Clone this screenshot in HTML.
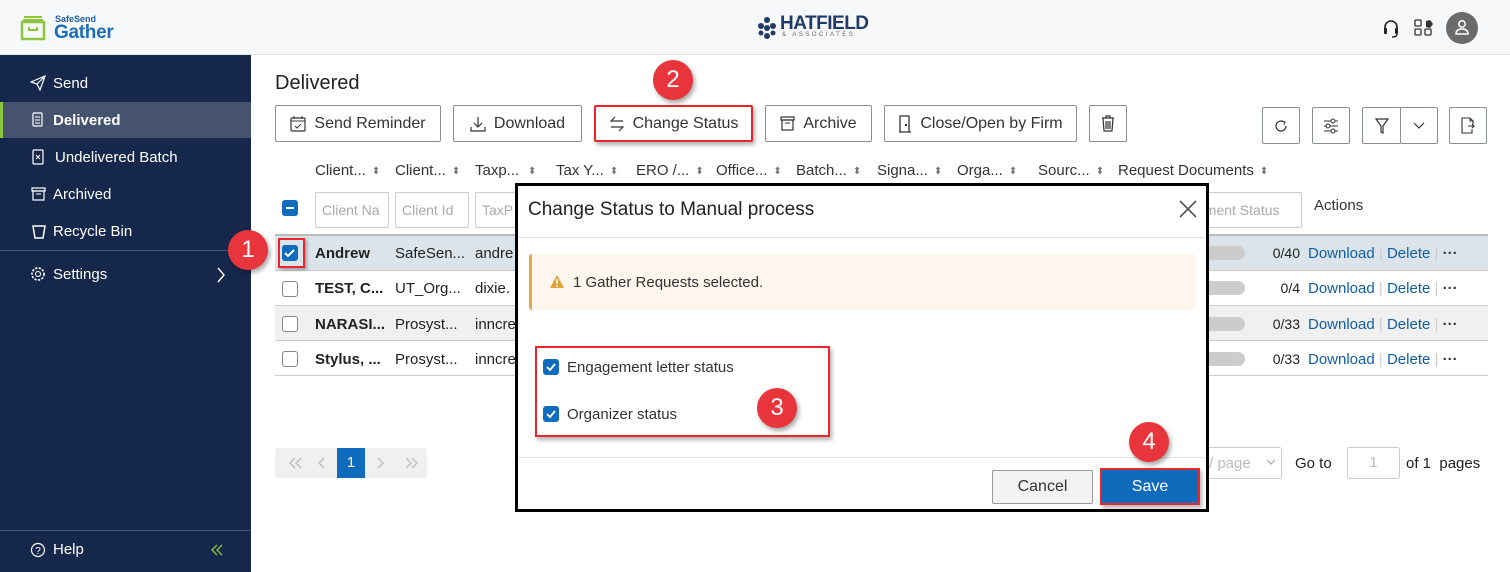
<!DOCTYPE html><html><head><style>
*{box-sizing:border-box;margin:0;padding:0}
body{width:1510px;height:572px;overflow:hidden;font-family:"Liberation Sans",sans-serif;background:#fff;position:relative;color:#222}
.a{position:absolute}
.top{left:0;top:0;width:1510px;height:55px;background:#f7f8fa;border-bottom:1px solid #e6e6e6}
.side{left:0;top:55px;width:251px;height:517px;background:#15284b}
.nav{position:absolute;left:53px;color:#fff;font-size:15px}
.btn{position:absolute;top:105px;height:37px;border:1px solid #8a8f95;border-radius:2px;background:#fff;font-size:16px;color:#333;display:flex;align-items:center;justify-content:center;gap:8px}
.ib{position:absolute;top:107px;height:37px;border:1px solid #8a8f95;border-radius:2px;background:#fff;display:flex;align-items:center;justify-content:center}
.h{position:absolute;top:162px;font-size:15px;color:#333;white-space:nowrap}
.h i{font-style:normal;font-size:10px;color:#777;margin-left:6px;vertical-align:1px}
.f{position:absolute;top:192px;height:36px;border:1px solid #ccc;border-radius:2px;color:#aaa;font-size:14px;padding:9px 6px;overflow:hidden;white-space:nowrap}
.row{position:absolute;left:275px;width:1213px;height:35px;border-bottom:1px solid #ccc}
.c{position:absolute;font-size:15px;white-space:nowrap}
.cb{position:absolute;left:282px;width:16px;height:16px;border:1px solid #888;border-radius:3px;background:#fff}
.badge{position:absolute;width:40px;height:40px;border-radius:50%;background:#e8353b;color:#fff;font-size:24px;text-align:center;line-height:40px;box-shadow:2px 3px 5px rgba(0,0,0,.35)}
.lnk{color:#0f5ea8}
.bar{position:absolute;left:1205px;width:40px;height:14px;background:#ccc;border-radius:0 7px 7px 0}
</style></head><body>
<div class="a top"></div>
<svg class="a" style="left:20px;top:14px" width="28" height="28"><rect x="2" y="8" width="22" height="17" fill="none" stroke="#8cc63f" stroke-width="2.5"/><rect x="4" y="2" width="18" height="2" fill="#8cc63f"/><rect x="3" y="5" width="20" height="2" fill="#8cc63f"/><path d="M9 13v3h8v-3" fill="none" stroke="#8cc63f" stroke-width="2"/></svg>
<div class="a" style="left:55px;top:14px;font-size:9px;font-weight:bold;color:#1b5fa3">SafeSend</div>
<div class="a" style="left:54px;top:22px;font-size:19px;font-weight:bold;color:#1b6fb8;letter-spacing:-.3px">Gather</div>
<svg class="a" style="left:756px;top:16px" width="22" height="24"><g fill="#1f3a6b"><circle cx="11" cy="4" r="3"/><circle cx="5" cy="10" r="3"/><circle cx="17" cy="10" r="3"/><circle cx="11" cy="12" r="3"/><circle cx="5" cy="17" r="2.5"/><circle cx="17" cy="17" r="2.5"/><circle cx="11" cy="20" r="3"/></g></svg>
<div class="a" style="left:780px;top:13px;font-size:19px;font-weight:bold;color:#1f3a6b;letter-spacing:-.5px">HATFIELD</div>
<div class="a" style="left:782px;top:32px;font-size:6px;color:#666;letter-spacing:2.5px">&amp; ASSOCIATES</div>
<svg class="a" style="left:1382px;top:18px" width="18" height="20"><path d="M3 11V9a6 6 0 0 1 12 0v2" fill="none" stroke="#222" stroke-width="1.6"/><rect x="2" y="10" width="3" height="6" rx="1" fill="#222"/><rect x="13" y="10" width="3" height="6" rx="1" fill="#222"/><path d="M15 16q0 3-5 3" fill="none" stroke="#222" stroke-width="1.4"/></svg>
<svg class="a" style="left:1414px;top:18px" width="22" height="20"><g fill="none" stroke="#333" stroke-width="1.3"><rect x="1" y="2" width="6" height="6" rx="1"/><rect x="1" y="11" width="6" height="6" rx="1"/><rect x="11" y="11" width="6" height="6" rx="1"/></g><path d="M12 3l4-1 3 4-3 4-4-1z" fill="#333"/></svg>
<div class="a" style="left:1446px;top:12px;width:32px;height:32px;border-radius:50%;background:#6b6b6b"></div>
<svg class="a" style="left:1454px;top:19px" width="16" height="18"><circle cx="8" cy="5" r="3.2" fill="none" stroke="#fff" stroke-width="1.5"/><path d="M2 15q0-5 6-5t6 5z" fill="none" stroke="#fff" stroke-width="1.5"/></svg>
<div class="a side"></div>
<div class="a" style="left:0;top:102px;width:251px;height:36px;background:#45536e"></div>
<div class="a" style="left:0;top:102px;width:3px;height:36px;background:#8cc63f"></div>
<div class="a" style="left:0;top:250px;width:251px;height:1px;background:#4a5878"></div>
<div class="a" style="left:0;top:530px;width:251px;height:1px;background:#4a5878"></div>
<svg class="a" style="left:30px;top:75px" width="16" height="16"><path d="M1 7L15 1 10 15 7 9z M7 9L15 1" fill="none" stroke="#fff" stroke-width="1.2"/></svg>
<div class="nav" style="top:75px">Send</div>
<svg class="a" style="left:32px;top:112px" width="12" height="16"><rect x="1" y="1" width="9" height="13" rx="1" fill="none" stroke="#fff" stroke-width="1.2"/><path d="M3 5h5M3 8h5M3 11h5" stroke="#fff"/></svg>
<div class="nav" style="top:112px;font-weight:bold">Delivered</div>
<svg class="a" style="left:32px;top:149px" width="12" height="16"><rect x="1" y="1" width="10" height="14" rx="1" fill="none" stroke="#fff" stroke-width="1.2"/><path d="M4 6l4 4M8 6l-4 4" stroke="#fff"/></svg>
<div class="nav" style="top:149px;left:55px">Undelivered Batch</div>
<svg class="a" style="left:31px;top:187px" width="15" height="14"><rect x="1" y="1" width="13" height="3" fill="none" stroke="#fff" stroke-width="1.2"/><rect x="2" y="4" width="11" height="9" fill="none" stroke="#fff" stroke-width="1.2"/><path d="M5 7h5" stroke="#fff"/></svg>
<div class="nav" style="top:186px">Archived</div>
<svg class="a" style="left:32px;top:224px" width="14" height="15"><path d="M1 2h12l-2 12H3z" fill="none" stroke="#fff" stroke-width="1.5"/></svg>
<div class="nav" style="top:223px">Recycle Bin</div>
<svg class="a" style="left:30px;top:266px" width="16" height="16"><circle cx="8" cy="8" r="2.5" fill="none" stroke="#fff" stroke-width="1.1"/><circle cx="8" cy="8" r="6" fill="none" stroke="#fff" stroke-width="1.6" stroke-dasharray="2.2 1.4"/></svg>
<div class="nav" style="top:266px">Settings</div>
<svg class="a" style="left:216px;top:266px" width="10" height="18"><path d="M2 2l6 7-6 7" fill="none" stroke="#fff" stroke-width="1.4"/></svg>
<svg class="a" style="left:30px;top:542px" width="16" height="16"><circle cx="8" cy="8" r="6.5" fill="none" stroke="#fff" stroke-width="1.2"/><text x="8" y="12" font-size="10" fill="#fff" text-anchor="middle" font-family="Liberation Sans">?</text></svg>
<div class="nav" style="top:541px">Help</div>
<svg class="a" style="left:210px;top:543px" width="14" height="14"><path d="M7 2L2 7l5 5M12 2L7 7l5 5" fill="none" stroke="#8cc63f" stroke-width="1.3"/></svg>
<div class="a" style="left:275px;top:72px;font-size:20px;color:#222">Delivered</div>
<div class="btn" style="left:275px;width:166px"><svg width="16" height="16"><rect x="1" y="2" width="14" height="13" rx="1" fill="none" stroke="#333" stroke-width="1.2"/><path d="M1 5h14M4 0v3M12 0v3M5 10l2 2 4-4" fill="none" stroke="#333"/></svg>Send Reminder</div>
<div class="btn" style="left:453px;width:129px"><svg width="16" height="16"><path d="M8 1v10M4 7l4 4 4-4M1 11v4h14v-4" fill="none" stroke="#333" stroke-width="1.2"/></svg>Download</div>
<div class="btn" style="left:594px;width:159px;border:2px solid #e8262c;box-shadow:2px 3px 4px rgba(0,0,0,.3)"><svg width="16" height="16"><path d="M14 5H2l4-4M2 11h12l-4 4" fill="none" stroke="#333" stroke-width="1.2"/></svg>Change Status</div>
<div class="btn" style="left:765px;width:107px"><svg width="15" height="15"><rect x="1" y="1" width="13" height="3" fill="none" stroke="#333" stroke-width="1.2"/><rect x="2" y="4" width="11" height="10" fill="none" stroke="#333" stroke-width="1.2"/><path d="M5 7h5" stroke="#333"/></svg>Archive</div>
<div class="btn" style="left:884px;width:193px"><svg width="14" height="18"><path d="M2 17V1h9v16M1 17h12" fill="none" stroke="#333" stroke-width="1.3"/><path d="M8 9v2" stroke="#333" stroke-width="2"/></svg>Close/Open by Firm</div>
<div class="btn" style="left:1089px;width:38px"><svg width="14" height="17"><path d="M1 3h12M5 3V1h4v2M2 3l1 13h8l1-13M5 6v8M7 6v8M9 6v8" fill="none" stroke="#333" stroke-width="1.2"/></svg></div>
<div class="ib" style="left:1262px;width:38px"><svg width="14" height="14"><path d="M12 7a5 5 0 1 1-2-4" fill="none" stroke="#333" stroke-width="1.2"/><path d="M8 2l3 1-1 3" fill="none" stroke="#333"/></svg></div>
<div class="ib" style="left:1312px;width:38px"><svg width="16" height="16"><path d="M1 3h14M1 8h14M1 13h14" stroke="#333"/><circle cx="10" cy="3" r="2" fill="#fff" stroke="#333"/><circle cx="5" cy="8" r="2" fill="#fff" stroke="#333"/><circle cx="10" cy="13" r="2" fill="#fff" stroke="#333"/></svg></div>
<div class="ib" style="left:1362px;width:39px"><svg width="14" height="16"><path d="M1 1h12L8 8v7l-2-1V8z" fill="none" stroke="#333" stroke-width="1.2"/></svg></div>
<div class="ib" style="left:1400px;width:38px"><svg width="12" height="8"><path d="M1 1l5 5 5-5" fill="none" stroke="#333" stroke-width="1.2"/></svg></div>
<div class="ib" style="left:1449px;width:38px"><svg width="14" height="17"><path d="M9 1H1v15h10v-4M9 1l3 3v3M9 1v3h3M7 9h6l-2-2M13 9l-2 2" fill="none" stroke="#333" stroke-width="1.1"/></svg></div>
<div class="h" style="left:315px">Client...<i>⬍</i></div><div class="h" style="left:395px">Client...<i>⬍</i></div><div class="h" style="left:475px">Taxp...<i>&nbsp;⬍</i></div><div class="h" style="left:556px">Tax Y...<i>⬍</i></div><div class="h" style="left:636px">ERO /...<i>⬍</i></div><div class="h" style="left:716px">Office...<i>⬍</i></div><div class="h" style="left:796px">Batch...<i>⬍</i></div><div class="h" style="left:877px">Signa...<i>⬍</i></div><div class="h" style="left:957px">Orga...<i>⬍</i></div><div class="h" style="left:1038px">Sourc...<i>⬍</i></div><div class="h" style="left:1118px">Request Documents<i>⬍</i></div>
<div class="a" style="left:282px;top:200px;width:16px;height:16px;border-radius:3px;background:#0f6cbd"><div style="margin:7px 4px;width:8px;height:2px;background:#fff"></div></div>
<div class="f" style="left:315px;width:74px">Client Na</div><div class="f" style="left:395px;width:74px">Client Id</div><div class="f" style="left:475px;width:60px">TaxP</div>
<div class="f" style="left:1190px;width:112px">ument Status</div>
<div class="c" style="left:1314px;top:197px;color:#333">Actions</div>
<div class="a" style="left:275px;top:234px;width:1213px;height:2px;background:#bbb"></div>
<div class="row" style="top:236px;background:#dce4eb"></div>
<div class="row" style="top:271px"></div>
<div class="row" style="top:306px;background:#f0f0f0"></div>
<div class="row" style="top:341px"></div>
<div class="a" style="left:278px;top:238px;width:27px;height:30px;border:2px solid #e8262c;box-shadow:2px 2px 3px rgba(0,0,0,.3)"></div>
<div class="a" style="left:282px;top:245px;width:16px;height:16px;border-radius:3px;background:#0f6cbd"><svg width="16" height="16"><path d="M3 8l3 3 6-6" fill="none" stroke="#fff" stroke-width="2"/></svg></div>
<div class="cb" style="top:281px"></div><div class="cb" style="top:316px"></div><div class="cb" style="top:351px"></div>
<div class="c" style="left:315px;top:245px;font-weight:bold">Andrew</div><div class="c" style="left:395px;top:245px">SafeSen...</div><div class="c" style="left:475px;top:245px">andre</div>
<div class="c" style="left:315px;top:280px;font-weight:bold">TEST, C...</div><div class="c" style="left:395px;top:280px">UT_Org...</div><div class="c" style="left:475px;top:280px">dixie.</div>
<div class="c" style="left:315px;top:316px;font-weight:bold">NARASI...</div><div class="c" style="left:395px;top:316px">Prosyst...</div><div class="c" style="left:475px;top:316px">inncre</div>
<div class="c" style="left:315px;top:351px;font-weight:bold">Stylus, ...</div><div class="c" style="left:395px;top:351px">Prosyst...</div><div class="c" style="left:475px;top:351px">inncre</div>
<div class="bar" style="top:246px"></div><div class="bar" style="top:281px"></div><div class="bar" style="top:317px"></div><div class="bar" style="top:352px"></div>
<div class="c" style="left:1240px;top:245px;width:60px;text-align:right;font-size:14px">0/40</div><div class="c" style="left:1240px;top:280px;width:60px;text-align:right;font-size:14px">0/4</div><div class="c" style="left:1240px;top:316px;width:60px;text-align:right;font-size:14px">0/33</div><div class="c" style="left:1240px;top:351px;width:60px;text-align:right;font-size:14px">0/33</div>
<div class="c lnk" style="left:1308px;top:245px">Download <span style="color:#ccc">|</span> Delete <span style="color:#ccc">|</span> <b style="color:#333">···</b></div>
<div class="c lnk" style="left:1308px;top:280px">Download <span style="color:#ccc">|</span> Delete <span style="color:#ccc">|</span> <b style="color:#333">···</b></div>
<div class="c lnk" style="left:1308px;top:316px">Download <span style="color:#ccc">|</span> Delete <span style="color:#ccc">|</span> <b style="color:#333">···</b></div>
<div class="c lnk" style="left:1308px;top:351px">Download <span style="color:#ccc">|</span> Delete <span style="color:#ccc">|</span> <b style="color:#333">···</b></div>
<div class="a" style="left:275px;top:448px;width:152px;height:30px;background:#eef0f1;border-radius:3px"></div>
<svg class="a" style="left:275px;top:448px" width="152" height="30"><g fill="none" stroke="#c4c4c4" stroke-width="1.6"><path d="M20 10l-5 5 5 5M26 10l-5 5 5 5M49 10l-5 5 5 5M103 10l5 5-5 5M131 10l5 5-5 5M137 10l5 5-5 5"/></g></svg>
<div class="a" style="left:337px;top:448px;width:28px;height:30px;background:#0f6cbd;color:#fff;text-align:center;line-height:30px;font-size:15px">1</div>
<div class="a" style="left:1190px;top:447px;width:92px;height:32px;border:1px solid #ccc;border-radius:3px;color:#bbb;font-size:15px;padding:7px 0 0 18px;white-space:nowrap;overflow:hidden">/ page</div>
<svg class="a" style="left:1266px;top:459px" width="10" height="8"><path d="M1 1l4 4 4-4" fill="none" stroke="#aaa" stroke-width="1.2"/></svg>
<div class="c" style="left:1295px;top:455px">Go to</div>
<div class="a" style="left:1347px;top:447px;width:53px;height:32px;border:1px solid #ccc;border-radius:3px;color:#bbb;text-align:center;line-height:30px;font-size:15px">1</div>
<div class="c" style="left:1406px;top:455px">of 1 &nbsp;pages</div>
<div class="a" style="left:515px;top:183px;width:694px;height:329px;border:3px solid #000;background:#fff"></div>
<div class="a" style="left:528px;top:199px;font-size:19px;color:#222">Change Status to Manual process</div>
<svg class="a" style="left:1179px;top:200px" width="18" height="18"><path d="M1 1l16 16M17 1L1 17" stroke="#555" stroke-width="1.6"/></svg>
<div class="a" style="left:518px;top:237px;width:688px;height:1px;background:#e2e2e2"></div>
<div class="a" style="left:529px;top:254px;width:667px;height:56px;background:#fdf6ec;border-left:3px solid #e0a94a;border-radius:3px"></div>
<svg class="a" style="left:549px;top:274px" width="16" height="15"><path d="M8 1l7 13H1z" fill="#e0a03a"/><path d="M8 5v5M8 11.5v1.5" stroke="#fff" stroke-width="1.6"/></svg>
<div class="c" style="left:573px;top:274px;color:#333">1 Gather Requests selected.</div>
<div class="a" style="left:535px;top:346px;width:295px;height:91px;border:2px solid #e8262c;box-shadow:2px 3px 4px rgba(0,0,0,.3)"></div>
<div class="a" style="left:543px;top:359px;width:16px;height:16px;border-radius:3px;background:#0f6cbd"><svg width="16" height="16"><path d="M4 8l3 3 5-6" fill="none" stroke="#fff" stroke-width="1.8"/></svg></div>
<div class="c" style="left:567px;top:359px;color:#333">Engagement letter status</div>
<div class="a" style="left:543px;top:406px;width:16px;height:16px;border-radius:3px;background:#0f6cbd"><svg width="16" height="16"><path d="M4 8l3 3 5-6" fill="none" stroke="#fff" stroke-width="1.8"/></svg></div>
<div class="c" style="left:567px;top:406px;color:#333">Organizer status</div>
<div class="a" style="left:518px;top:457px;width:688px;height:1px;background:#e2e2e2"></div>
<div class="a" style="left:992px;top:470px;width:101px;height:34px;border:1px solid #999;border-radius:2px;background:#f3f3f3;text-align:center;line-height:32px;font-size:16px;color:#333">Cancel</div>
<div class="a" style="left:1100px;top:468px;width:100px;height:37px;border:2px solid #e8262c;background:#0f6cbd;text-align:center;line-height:33px;font-size:16px;color:#fff;box-shadow:2px 3px 4px rgba(0,0,0,.3)">Save</div>
<div class="badge" style="left:228px;top:230px">1</div>
<div class="badge" style="left:653px;top:60px">2</div>
<div class="badge" style="left:757px;top:388px">3</div>
<div class="badge" style="left:1129px;top:422px">4</div>
</body></html>
